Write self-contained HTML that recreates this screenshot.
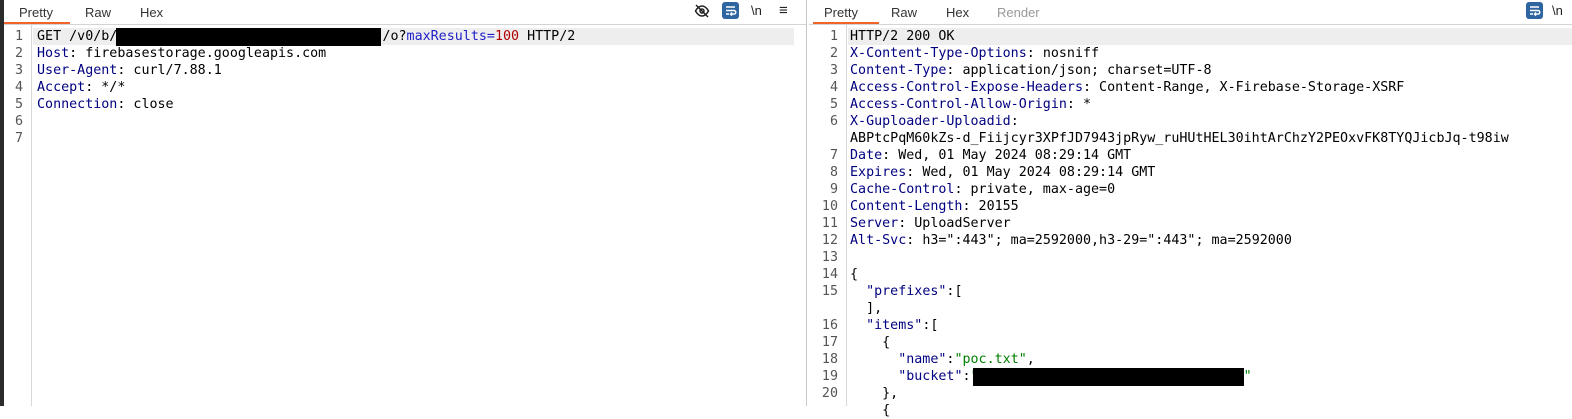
<!DOCTYPE html>
<html><head><style>
*{margin:0;padding:0;box-sizing:border-box}
body{width:1572px;height:406px;background:#fff;position:relative;overflow:hidden;font-family:"Liberation Sans",sans-serif}
.strip{position:absolute;left:0;top:0;width:4px;height:406px;background:#2b2b2b}
.pane{position:absolute;top:0;height:406px;background:#fff}
.tabs{position:absolute;top:0;left:0;right:0;height:25px;border-bottom:1px solid #d4d4d4}
.tab{position:absolute;top:5px;font-size:13px;color:#333}
.ul{position:absolute;top:22px;height:2px;background:#f0642c}
.gut{position:absolute;top:25px;bottom:0;border-right:1px solid #d8d8d8}
.code{position:absolute;top:28px;font-family:"DejaVu Sans Mono","Liberation Mono",monospace;font-size:13.35px;line-height:17px;white-space:pre;color:#000}
.num{position:absolute;top:28px;font-family:"DejaVu Sans Mono",monospace;font-size:13.35px;line-height:17px;white-space:pre;color:#555;text-align:right}
.k{color:#000080}.b{color:#1d1dc8}.r{color:#b00000}.g{color:#008000}
.hl{position:absolute;top:28px;height:17px;background:#eeeeee}
.red{position:absolute;background:#000}
.blue{position:absolute;top:2px;width:17px;height:17px;background:#2e64a0;border-radius:3px}
</style></head><body>
<div class="pane" style="left:4px;width:802px">
 <div class="tabs"></div>
 <div class="tab" style="left:15px">Pretty</div>
 <div class="tab" style="left:81px">Raw</div>
 <div class="tab" style="left:136px">Hex</div>
 <div class="ul" style="left:0;width:66px"></div>
 <svg style="position:absolute;left:690px;top:3px" width="16" height="16" viewBox="0 0 16 16" fill="none" stroke="#222" stroke-width="1.5"><path d="M1.5 8c2-3.5 4-5 6.5-5s4.5 1.5 6.5 5c-2 3.5-4 5-6.5 5s-4.5-1.5-6.5-5z"/><circle cx="8" cy="8" r="2"/><path d="M2 2l12 12"/></svg>
 <div class="blue" style="left:718px"><svg width="17" height="17" viewBox="0 0 17 17" fill="none" stroke="#fff" stroke-width="1.4"><path d="M4 5h9M4 8.5h8a1.8 1.8 0 0 1 0 3.6H9M10 10.5l-1.5 1.6 1.5 1.5M4 12h3"/></svg></div>
 <div style="position:absolute;left:747px;top:3px;font-size:13px;color:#222">\n</div>
 <div style="position:absolute;left:775px;top:2px;font-size:15px;color:#222">≡</div>
 <div class="gut" style="left:0;width:28px"></div>
 <div class="hl" style="left:29px;width:761px"></div>
 <div class="num" style="left:0;width:19px">1
2
3
4
5
6
7</div>
 <div class="code" style="left:33px">GET /v0/b/                                 /o?<span class="b">maxResults</span><span class="b">=</span><span class="r">100</span> HTTP/2
<span class="k">Host</span>: firebasestorage.googleapis.com
<span class="k">User-Agent</span>: curl/7.88.1
<span class="k">Accept</span>: */*
<span class="k">Connection</span>: close</div>
 <div class="red" style="left:112px;top:28px;width:265px;height:18px"></div>
</div>
<div style="position:absolute;left:806px;top:0;width:1px;height:406px;background:#c8c8c8"></div>
<div class="pane" style="left:809px;width:763px">
 <div class="tabs"></div>
 <div class="tab" style="left:15px">Pretty</div>
 <div class="tab" style="left:82px">Raw</div>
 <div class="tab" style="left:137px">Hex</div>
 <div class="tab" style="left:188px;color:#999">Render</div>
 <div class="ul" style="left:4px;width:66px"></div>
 <div class="blue" style="left:717px"><svg width="17" height="17" viewBox="0 0 17 17" fill="none" stroke="#fff" stroke-width="1.4"><path d="M4 5h9M4 8.5h8a1.8 1.8 0 0 1 0 3.6H9M10 10.5l-1.5 1.6 1.5 1.5M4 12h3"/></svg></div>
 <div style="position:absolute;left:743px;top:3px;font-size:13px;color:#222">\n</div>
 <div class="gut" style="left:0;width:38px"></div>
 <div class="hl" style="left:39px;width:724px"></div>
 <div class="num" style="left:0;width:29px">1
2
3
4
5
6

7
8
9
10
11
12
13
14
15

16
17
18
19
20</div>
 <div class="code" style="left:41px">HTTP/2 200 OK
<span class="k">X-Content-Type-Options</span>: nosniff
<span class="k">Content-Type</span>: application/json; charset=UTF-8
<span class="k">Access-Control-Expose-Headers</span>: Content-Range, X-Firebase-Storage-XSRF
<span class="k">Access-Control-Allow-Origin</span>: *
<span class="k">X-Guploader-Uploadid</span>:
ABPtcPqM60kZs-d_Fiijcyr3XPfJD7943jpRyw_ruHUtHEL30ihtArChzY2PEOxvFK8TYQJicbJq-t98iw
<span class="k">Date</span>: Wed, 01 May 2024 08:29:14 GMT
<span class="k">Expires</span>: Wed, 01 May 2024 08:29:14 GMT
<span class="k">Cache-Control</span>: private, max-age=0
<span class="k">Content-Length</span>: 20155
<span class="k">Server</span>: UploadServer
<span class="k">Alt-Svc</span>: h3=":443"; ma=2592000,h3-29=":443"; ma=2592000

{
  <span class="k">"prefixes"</span>:[
  ],
  <span class="k">"items"</span>:[
    {
      <span class="k">"name"</span>:<span class="g">"poc.txt"</span>,
      <span class="k">"bucket"</span>:<span class="g">"                                 "</span>
    },
    {</div>
 <div class="red" style="left:164px;top:368px;width:271px;height:18px"></div>
</div>
<div class="strip"></div>
</body></html>
